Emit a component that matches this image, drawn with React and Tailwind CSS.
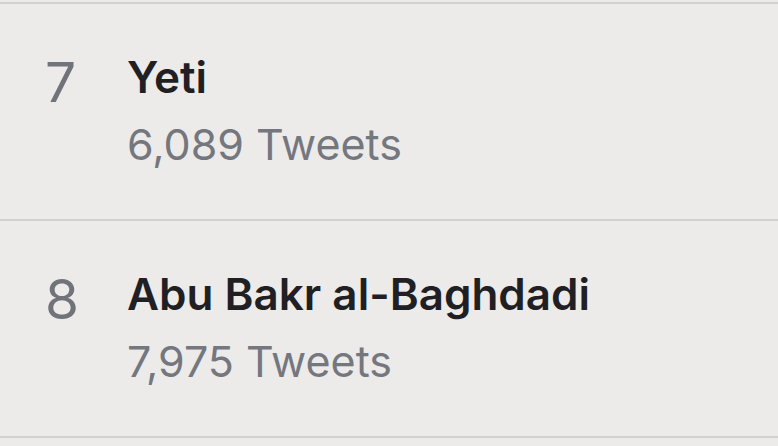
const trends = [
  { rank: 7, name: "Yeti", tweets: "6,089 Tweets" },
  { rank: 8, name: "Abu Bakr al-Baghdadi", tweets: "7,975 Tweets" },
];

function TrendRow({ trend }) {
  return (
    <div className="flex h-[217px] border-b-2 border-[#d2d1d0] pt-[46px]">
      <div className="w-[127px] shrink-0 pl-[45px] pt-[5px]">
        <span className="text-[55px] leading-[54px] text-[#70737a]">{trend.rank}</span>
      </div>
      <div className="flex flex-col">
        <span className="text-[44px] leading-[54px] font-semibold text-[#1f1f24]">
          {trend.name}
        </span>
        <span className="mt-[13px] text-[43px] leading-[54px] text-[#74777e]">{trend.tweets}</span>
      </div>
    </div>
  );
}

export default function App() {
  return (
    <div className="h-[446px] w-[778px] overflow-hidden bg-[#ecebea] pt-[2px] font-['Inter',sans-serif]">
      <div className="border-t-2 border-[#d2d1d0]">
        {trends.map((t) => (
          <TrendRow key={t.rank} trend={t} />
        ))}
      </div>
    </div>
  );
}
